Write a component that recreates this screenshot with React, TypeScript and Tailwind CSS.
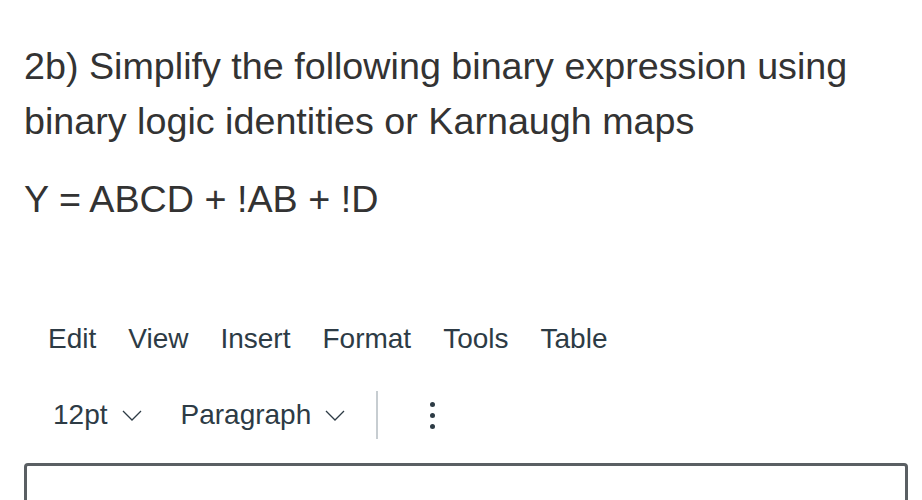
import React from 'react';

const menus = ['Edit', 'View', 'Insert', 'Format', 'Tools', 'Table'];

function Chevron() {
  return (
    <svg width="20" height="11" viewBox="0 0 20 11" className="ml-[14px] mt-[1px]" fill="none">
      <path d="M1 1l9 9 9-9" stroke="#2d3b45" strokeWidth="1.3" />
    </svg>
  );
}

export default function App() {
  return (
    <div className="w-[922px] h-[500px] overflow-hidden bg-white font-['Liberation_Sans',Arial,sans-serif]">
      <div className="pl-[24px] pt-[39px] text-[#333333] text-[37.7px] leading-[55px]">
        <p>2b) Simplify the following binary expression using binary logic identities or Karnaugh maps</p>
        <p className="mt-[23px]">Y = ABCD + !AB + !D</p>
      </div>

      <div className="mt-[92px] pl-[32px] flex text-[28px] leading-[40px] text-[#2d3b45]">
        {menus.map((m) => (
          <span key={m} className="px-[16px]">{m}</span>
        ))}
      </div>

      <div className="mt-[32px] pl-[53px] flex items-center h-[48px] text-[28px] leading-[48px] text-[#2d3b45]">
        <div className="flex items-center">
          <span>12pt</span>
          <Chevron />
        </div>
        <div className="flex items-center ml-[39px]">
          <span>Paragraph</span>
          <Chevron />
        </div>
        <div className="ml-[31px] w-[2px] h-[48px] bg-[#c7cdd1]" />
        <div className="ml-[52px] flex flex-col gap-[6px]">
          <span className="w-[5px] h-[5px] rounded-full bg-[#2d3b45]" />
          <span className="w-[5px] h-[5px] rounded-full bg-[#2d3b45]" />
          <span className="w-[5px] h-[5px] rounded-full bg-[#2d3b45]" />
        </div>
      </div>

      <div className="mt-[24px] ml-[24px] w-[884px] h-[120px] border-[3px] border-[#5a5f63] rounded-[4px]" />
    </div>
  );
}
